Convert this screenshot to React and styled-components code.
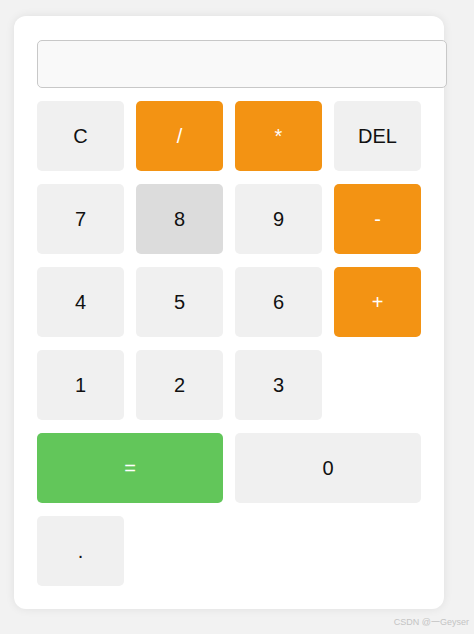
import styled, { createGlobalStyle } from 'styled-components';

const GlobalStyle = createGlobalStyle`
  html, body {
    margin: 0;
    padding: 0;
    background: #f2f2f2;
    font-family: "Liberation Sans", Arial, sans-serif;
  }
`;

const keys = [
  { label: 'C' },
  { label: '/', kind: 'op' },
  { label: '*', kind: 'op' },
  { label: 'DEL' },
  { label: '7' },
  { label: '8', active: true },
  { label: '9' },
  { label: '-', kind: 'op' },
  { label: '4' },
  { label: '5' },
  { label: '6' },
  { label: '+', kind: 'op' },
  { label: '1' },
  { label: '2' },
  { label: '3' },
  { label: '', empty: true },
  { label: '=', kind: 'eq', span: 2 },
  { label: '0', span: 2 },
  { label: '.' },
];

function App() {
  return (
    <Page>
      <GlobalStyle />
      <Calculator>
        <Display type="text" readOnly value="" />
        <Keypad>
          {keys.map((k, i) =>
            k.empty ? (
              <span key={i} />
            ) : (
              <Key key={i} $kind={k.kind} $span={k.span} $active={k.active}>
                {k.label}
              </Key>
            )
          )}
        </Keypad>
      </Calculator>
      <Watermark>CSDN @一Geyser</Watermark>
    </Page>
  );
}

const Page = styled.div`
  position: relative;
  width: 474px;
  height: 634px;
  padding: 16px 0 0 14px;
  box-sizing: border-box;
`;

const Calculator = styled.div`
  width: 430px;
  box-sizing: border-box;
  padding: 24px 23px 23px;
  background: #fff;
  border-radius: 12px;
  box-shadow: 0 0 10px rgba(0, 0, 0, 0.08);
`;

const Display = styled.input`
  display: block;
  width: 384px;
  height: 46px;
  padding: 0 12px;
  box-sizing: content-box;
  margin: 0 0 13px;
  border: 1px solid #c8c8c8;
  border-radius: 5px;
  background: #f9f9f9;
  font-family: inherit;
  font-size: 20px;
  outline: none;
`;

const Keypad = styled.div`
  display: grid;
  grid-template-columns: repeat(4, 87px);
  grid-auto-rows: 70.4px;
  column-gap: 12px;
  row-gap: 12.6px;
`;

const colors = {
  op: '#f39313',
  eq: '#62c65a',
};

const Key = styled.button`
  grid-column: span ${(p) => p.$span || 1};
  border: none;
  border-radius: 5px;
  background: ${(p) => (p.$active ? '#dcdcdc' : colors[p.$kind] || '#f0f0f0')};
  color: ${(p) => (p.$kind ? '#fff' : '#111')};
  font-family: "Liberation Sans", Arial, sans-serif;
  font-size: 20px;
  cursor: pointer;
  padding: 0;
`;

const Watermark = styled.div`
  position: absolute;
  right: 5px;
  bottom: 6px;
  font-size: 9px;
  color: #c4c4c4;
  font-family: "Liberation Sans", "Noto Sans CJK SC", sans-serif;
`;

export default App;
